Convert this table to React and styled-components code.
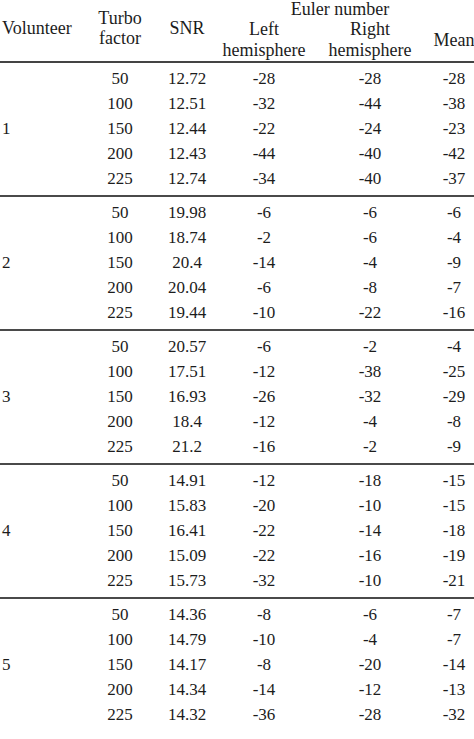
import React from "react";
import styled, { createGlobalStyle } from "styled-components";

const COLS = "88px 64px 70px 84px 128px 40px";

const Global = createGlobalStyle`
  html, body { margin: 0; padding: 0; background: #ffffff; }
  body { font-family: "Liberation Serif", "Times New Roman", serif; color: #1c1c1c; }
`;

const Page = styled.div`
  width: 474px;
  height: 739px;
  overflow: hidden;
  background: #fff;
  font-size: 17px;
`;

const Header = styled.div`
  display: grid;
  grid-template-columns: ${COLS};
  grid-template-rows: 19px 42px;
  border-bottom: 2px solid #444;
  font-size: 18px;
`;

const HeadCell = styled.div`
  grid-column: ${(p) => p.$col};
  grid-row: ${(p) => p.$row};
  align-self: center;
  justify-self: ${(p) => (p.$left ? "start" : "center")};
  text-align: ${(p) => (p.$left ? "left" : "center")};
  line-height: ${(p) => p.$lh || 20}px;
  padding-left: ${(p) => (p.$left ? 2 : 0)}px;
  padding-bottom: ${(p) => p.$pb || 0}px;
  padding-right: ${(p) => p.$pr || 0}px;
  white-space: nowrap;
`;

const Group = styled.div`
  display: grid;
  grid-template-columns: ${COLS};
  grid-auto-rows: 25px;
  padding: 3px 0 4px;
  border-top: ${(p) => (p.$first ? "none" : "2px solid #4a4a4a")};
`;

const Volunteer = styled.div`
  grid-column: 1;
  grid-row: 1 / span 5;
  align-self: center;
  padding-left: 2px;
  line-height: 25px;
`;

const Cell = styled.div`
  text-align: center;
  line-height: 25px;
  white-space: nowrap;
`;

const data = [
  [
    ["50", "12.72", "-28", "-28", "-28"],
    ["100", "12.51", "-32", "-44", "-38"],
    ["150", "12.44", "-22", "-24", "-23"],
    ["200", "12.43", "-44", "-40", "-42"],
    ["225", "12.74", "-34", "-40", "-37"],
  ],
  [
    ["50", "19.98", "-6", "-6", "-6"],
    ["100", "18.74", "-2", "-6", "-4"],
    ["150", "20.4", "-14", "-4", "-9"],
    ["200", "20.04", "-6", "-8", "-7"],
    ["225", "19.44", "-10", "-22", "-16"],
  ],
  [
    ["50", "20.57", "-6", "-2", "-4"],
    ["100", "17.51", "-12", "-38", "-25"],
    ["150", "16.93", "-26", "-32", "-29"],
    ["200", "18.4", "-12", "-4", "-8"],
    ["225", "21.2", "-16", "-2", "-9"],
  ],
  [
    ["50", "14.91", "-12", "-18", "-15"],
    ["100", "15.83", "-20", "-10", "-15"],
    ["150", "16.41", "-22", "-14", "-18"],
    ["200", "15.09", "-22", "-16", "-19"],
    ["225", "15.73", "-32", "-10", "-21"],
  ],
  [
    ["50", "14.36", "-8", "-6", "-7"],
    ["100", "14.79", "-10", "-4", "-7"],
    ["150", "14.17", "-8", "-20", "-14"],
    ["200", "14.34", "-14", "-12", "-13"],
    ["225", "14.32", "-36", "-28", "-32"],
  ],
];

export default function App() {
  return (
    <Page>
      <Global />
      <Header>
        <HeadCell $col="1" $row="1 / 3" $left $pb={5}>Volunteer</HeadCell>
        <HeadCell $col="2" $row="1 / 3" $pb={5}>Turbo<br />factor</HeadCell>
        <HeadCell $col="3" $row="1 / 3" $pb={5}>SNR</HeadCell>
        <HeadCell $col="4 / 7" $row="1" $lh={19} $pr={16}>Euler number</HeadCell>
        <HeadCell $col="4" $row="2" $lh={21}>Left<br />hemisphere</HeadCell>
        <HeadCell $col="5" $row="2" $lh={21}>Right<br />hemisphere</HeadCell>
        <HeadCell $col="6" $row="2" $lh={21}>Mean</HeadCell>
      </Header>
      {data.map((rows, gi) => (
        <Group key={gi} $first={gi === 0}>
          <Volunteer>{gi + 1}</Volunteer>
          {rows.map((r) => r.map((v, ci) => <Cell key={r[0] + "-" + ci}>{v}</Cell>))}
        </Group>
      ))}
    </Page>
  );
}
